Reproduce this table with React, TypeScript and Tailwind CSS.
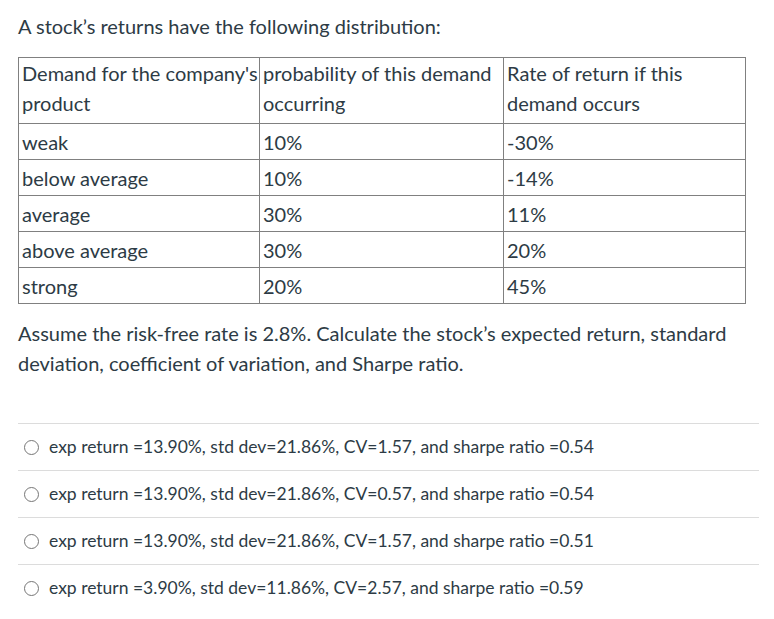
import React from "react";

const rows = [
  ["weak", "10%", "-30%"],
  ["below average", "10%", "-14%"],
  ["average", "30%", "11%"],
  ["above average", "30%", "20%"],
  ["strong", "20%", "45%"],
];

const answers = [
  "exp return =13.90%, std dev=21.86%, CV=1.57, and sharpe ratio =0.54",
  "exp return =13.90%, std dev=21.86%, CV=0.57, and sharpe ratio =0.54",
  "exp return =13.90%, std dev=21.86%, CV=1.57, and sharpe ratio =0.51",
  "exp return =3.90%, std dev=11.86%, CV=2.57, and sharpe ratio =0.59",
];

export default function App() {
  return (
    <div
      className="w-[774px] h-[619px] bg-white text-[#2d3b45] overflow-hidden"
      style={{ fontFamily: "Lato, 'Noto Sans', sans-serif" }}
    >
      <div className="pl-[18px] pr-[15px] pt-[12px]">
        <p className="text-[20px] leading-[28px]">A stock’s returns have the following distribution:</p>
        <table className="mt-[17px] w-[728px] border-collapse text-[20px] leading-[30px] table-fixed">
          <tbody>
            <tr>
              <td className="border border-[#808080] pl-[3px] pr-0 align-top w-[241px] h-[66px]">
                Demand for the company's product
              </td>
              <td className="border border-[#808080] pl-[3px] align-top w-[244px]">
                probability of this demand occurring
              </td>
              <td className="border border-[#808080] pl-[3px] align-top">
                Rate of return if this demand occurs
              </td>
            </tr>
            {rows.map((r, i) => (
              <tr key={i}>
                {r.map((c, j) => (
                  <td key={j} className="border border-[#808080] pl-[3px] h-[36px]">
                    {c}
                  </td>
                ))}
              </tr>
            ))}
          </tbody>
        </table>
        <p className="mt-[14px] text-[20px] leading-[30px] w-[741px]">
          Assume the risk-free rate is 2.8%. Calculate the stock’s expected return, standard deviation, coefficient of variation, and Sharpe ratio.
        </p>
        <div className="mt-[45px] w-[741px]">
          {answers.map((a, i) => (
            <div key={i} className="border-t border-[#dcdcdc] h-[47px] flex items-center">
              <span className="ml-[6px] w-[15px] h-[15px] rounded-full border border-[#767676] shrink-0" />
              <span className="ml-[10px] text-[17.5px] leading-[24px] whitespace-nowrap">{a}</span>
            </div>
          ))}
        </div>
      </div>
    </div>
  );
}
